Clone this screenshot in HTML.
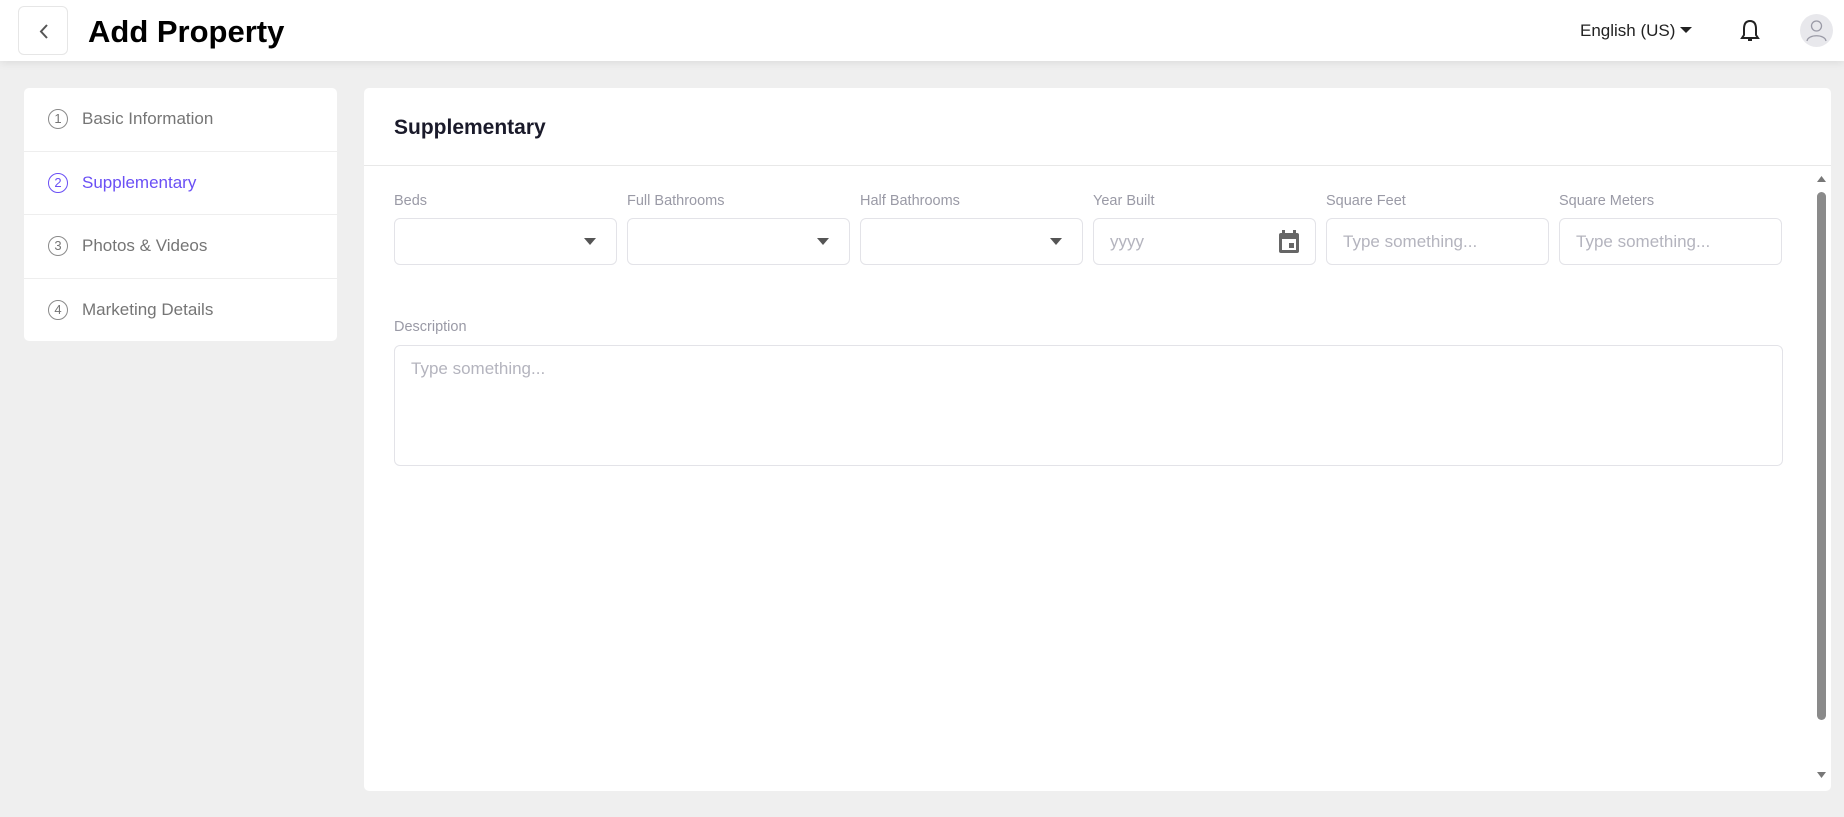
<!DOCTYPE html>
<html><head><style>
*{box-sizing:border-box;margin:0;padding:0}
body{width:1844px;height:817px;background:#efefef;font-family:"Liberation Sans",sans-serif;position:relative;overflow:hidden}
.hdr{position:absolute;left:0;top:0;width:1844px;height:61px;background:#fff;box-shadow:0 2px 8px rgba(0,0,0,.08)}
.back{position:absolute;left:18px;top:6px;width:50px;height:49px;border:1px solid #e6e6e6;border-radius:6px}
.title{position:absolute;left:88px;top:14px;font-size:31px;font-weight:bold;color:#000}
.lang{position:absolute;left:1580px;top:21px;font-size:17px;color:#222}
.lc{position:absolute;left:24px;top:88px;width:313px;height:253px;background:#fff;border-radius:5px}
.item{height:63.5px;border-bottom:1px solid #eeeeee;position:relative;color:#757575;font-size:17px}
.item:last-child{border-bottom:none}
.item .n{position:absolute;left:24px;top:21px;width:20px;height:20px;border:1px solid #8a8a8a;border-radius:50%;font-size:13px;text-align:center;line-height:18px}
.item .t{position:absolute;left:58px;top:21px}
.item.a{color:#6a4ff5}.item.a .n{border-color:#6a4ff5}
.mc{position:absolute;left:364px;top:88px;width:1467px;height:703px;background:#fff;border-radius:5px}
.mt{position:absolute;left:30px;top:28px;font-size:21px;font-weight:bold;color:#1a1a2a}
.div{position:absolute;left:0;top:77px;width:1467px;height:1px;background:#e8e8e8}
.lbl{position:absolute;font-size:14.5px;color:#9a9aa6;top:105px}
.in{position:absolute;top:130px;width:223px;height:47px;border:1px solid #e3e3e8;border-radius:6px}
.ph{position:absolute;left:16px;top:13px;font-size:17px;color:#b4b4be}
.car{position:absolute;right:20px;top:19px;border-left:6px solid transparent;border-right:6px solid transparent;border-top:7px solid #555}
</style></head><body>
<div class="hdr">
<div class="back"><svg width="50" height="49"><path d="M28 18 L22 24.5 L28 31" stroke="#555" stroke-width="2" fill="none"/></svg></div>
<div class="title">Add Property</div>
<div class="lang">English (US)</div>
<svg style="position:absolute;left:1680px;top:27px" width="12" height="8"><path d="M0 0 L12 0 L6 6Z" fill="#222"/></svg>
<svg style="position:absolute;left:1738px;top:18px" width="24" height="26"><path d="M12 3 C7 3 6 7 6 11 L6 17 L4 20 L20 20 L18 17 L18 11 C18 7 17 3 12 3Z" fill="none" stroke="#222" stroke-width="2"/><path d="M10 22 L14 22" stroke="#222" stroke-width="2"/></svg>
<div style="position:absolute;left:1800px;top:14px;width:33px;height:33px;border-radius:50%;background:#e8e8ec"></div>
<svg style="position:absolute;left:1800px;top:14px" width="33" height="33"><circle cx="16.5" cy="12" r="5" fill="none" stroke="#9a9aa6" stroke-width="1.3"/><path d="M7 27 C8 20 25 20 26 27" fill="none" stroke="#9a9aa6" stroke-width="1.3"/></svg>
</div>
<div class="lc">
<div class="item"><span class="n">1</span><span class="t">Basic Information</span></div>
<div class="item a"><span class="n">2</span><span class="t">Supplementary</span></div>
<div class="item"><span class="n">3</span><span class="t">Photos &amp; Videos</span></div>
<div class="item"><span class="n">4</span><span class="t">Marketing Details</span></div>
</div>
<div class="mc">
<div class="mt">Supplementary</div>
<div class="div"></div>
<div class="lbl" style="left:30px">Beds</div>
<div class="lbl" style="left:263px">Full Bathrooms</div>
<div class="lbl" style="left:496px">Half Bathrooms</div>
<div class="lbl" style="left:729px">Year Built</div>
<div class="lbl" style="left:962px">Square Feet</div>
<div class="lbl" style="left:1195px">Square Meters</div>
<div class="in" style="left:30px"><div class="car"></div></div>
<div class="in" style="left:263px"><div class="car"></div></div>
<div class="in" style="left:496px"><div class="car"></div></div>
<div class="in" style="left:729px"><div class="ph">yyyy</div>
<svg style="position:absolute;right:14px;top:10px" width="24" height="26"><rect x="2" y="4" width="20" height="20" rx="2" fill="#666"/><rect x="5" y="10" width="14" height="11" fill="#fff"/><rect x="12" y="14" width="5" height="5" fill="#666"/><rect x="5" y="1" width="3" height="5" fill="#666"/><rect x="16" y="1" width="3" height="5" fill="#666"/></svg></div>
<div class="in" style="left:962px"><div class="ph">Type something...</div></div>
<div class="in" style="left:1195px"><div class="ph">Type something...</div></div>
<div class="lbl" style="left:30px;top:231px">Description</div>
<div class="in" style="left:30px;top:257px;width:1389px;height:121px"><div class="ph">Type something...</div></div>
<svg style="position:absolute;left:1452px;top:86px" width="11" height="620"><path d="M1 8 L5.5 2 L10 8Z" fill="#777"/><rect x="1" y="18" width="9" height="528" rx="4.5" fill="#8a8a8a"/><path d="M1 598 L5.5 604 L10 598Z" fill="#777"/></svg>
</div>
</body></html>
